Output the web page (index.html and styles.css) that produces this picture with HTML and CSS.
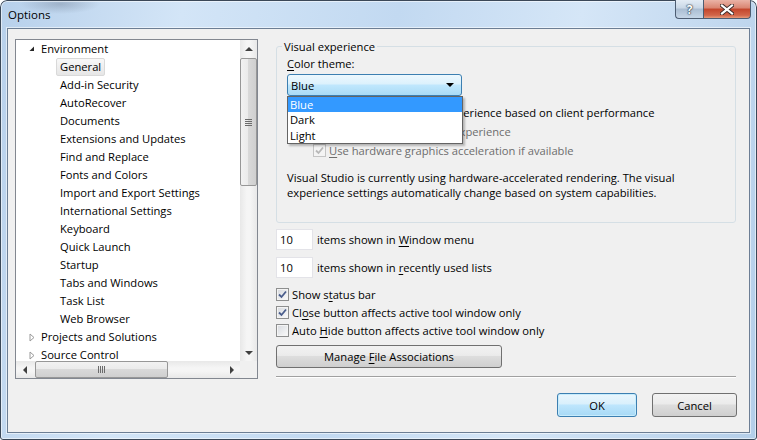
FILE: index.html
```html
<!DOCTYPE html>
<html lang="en">
<head>
    <meta charset="UTF-8">
    <title>Options</title>
    <link rel="stylesheet" href="styles.css">
</head>
<body>
    <div class="window">
        <div class="titlebar">
            <span class="title">Options</span>
            <div class="caption-buttons">
                <span class="cap-btn help">?</span>
                <span class="cap-btn close">
                    <svg width="14" height="11" viewBox="0 0 14 11">
                        <path d="M2 1.5 L12 9.5 M12 1.5 L2 9.5" stroke="#3b2a28" stroke-width="4" stroke-linecap="square"/>
                        <path d="M2 1.5 L12 9.5 M12 1.5 L2 9.5" stroke="#ffffff" stroke-width="2.2" stroke-linecap="square"/>
                    </svg>
                </span>
            </div>
        </div>

        <div class="client">
            <!-- left: category tree -->
            <div class="tree">
                <ul class="tree-list">
                    <li class="node">
                        <svg class="exp" width="8" height="8" viewBox="0 0 8 8"><polygon points="6,1.5 6,6 1.5,6" fill="#262626"/></svg>
                        <span>Environment</span>
                    </li>
                    <li class="leaf"><span class="selected">General</span></li>
                    <li class="leaf"><span>Add-in Security</span></li>
                    <li class="leaf"><span>AutoRecover</span></li>
                    <li class="leaf"><span>Documents</span></li>
                    <li class="leaf"><span>Extensions and Updates</span></li>
                    <li class="leaf"><span>Find and Replace</span></li>
                    <li class="leaf"><span>Fonts and Colors</span></li>
                    <li class="leaf"><span>Import and Export Settings</span></li>
                    <li class="leaf"><span>International Settings</span></li>
                    <li class="leaf"><span>Keyboard</span></li>
                    <li class="leaf"><span>Quick Launch</span></li>
                    <li class="leaf"><span>Startup</span></li>
                    <li class="leaf"><span>Tabs and Windows</span></li>
                    <li class="leaf"><span>Task List</span></li>
                    <li class="leaf"><span>Web Browser</span></li>
                    <li class="node">
                        <svg class="exp" width="8" height="9" viewBox="0 0 8 9"><polygon points="2,1 6,4.5 2,8" fill="#ffffff" stroke="#9a9a9a" stroke-width="1"/></svg>
                        <span>Projects and Solutions</span>
                    </li>
                    <li class="node">
                        <svg class="exp" width="8" height="9" viewBox="0 0 8 9"><polygon points="2,1 6,4.5 2,8" fill="#ffffff" stroke="#9a9a9a" stroke-width="1"/></svg>
                        <span>Source Control</span>
                    </li>
                </ul>

                <div class="vscroll">
                    <div class="sb-btn"><span class="arrow-up"></span></div>
                    <div class="sb-track">
                        <div class="thumb-v"><span class="grip-v"></span></div>
                    </div>
                    <div class="sb-btn"><span class="arrow-down"></span></div>
                </div>

                <div class="hscroll">
                    <div class="sb-btn"><span class="arrow-left"></span></div>
                    <div class="sb-track">
                        <div class="thumb-h"><span class="grip-h"></span></div>
                    </div>
                    <div class="sb-btn"><span class="arrow-right"></span></div>
                </div>

                <div class="corner"></div>
            </div>

            <!-- right: settings page -->
            <div class="pane">
                <fieldset class="group">
                    <legend>Visual experience</legend>
                    <div class="field-label"><u>C</u>olor theme:</div>

                    <div class="combo-wrap">
                        <div class="combo">
                            <span>Blue</span>
                            <span class="combo-arrow"></span>
                        </div>
                        <ul class="dropdown">
                            <li class="active">Blue</li>
                            <li>Dark</li>
                            <li>Light</li>
                        </ul>
                    </div>

                    <div class="visual-checks">
                        <div class="check-row">
                            <span class="checkbox">
                                <svg width="11" height="11" viewBox="0 0 11 11"><path d="M2 5.5 L4.5 8 L9 2.5" fill="none" stroke="#4a5d8c" stroke-width="1.8"/></svg>
                            </span>
                            <span>Automatically adjust visual experience based on client performance</span>
                        </div>
                        <div class="check-row indent disabled">
                            <span class="checkbox"></span>
                            <span>Enable rich client visual experience</span>
                        </div>
                        <div class="check-row indent disabled">
                            <span class="checkbox">
                                <svg width="11" height="11" viewBox="0 0 11 11"><path d="M2 5.5 L4.5 8 L9 2.5" fill="none" stroke="#b8b8b8" stroke-width="1.8"/></svg>
                            </span>
                            <span><u>U</u>se hardware graphics acceleration if available</span>
                        </div>
                    </div>

                    <p class="note">Visual Studio is currently using hardware-accelerated rendering. The visual experience settings automatically change based on system capabilities.</p>
                </fieldset>

                <div class="spin-row first">
                    <span class="spin">10</span>
                    <span>items shown in <u>W</u>indow menu</span>
                </div>
                <div class="spin-row">
                    <span class="spin">10</span>
                    <span>items shown in <u>r</u>ecently used lists</span>
                </div>

                <div class="options">
                    <div class="check-row">
                        <span class="checkbox">
                            <svg width="11" height="11" viewBox="0 0 11 11"><path d="M2 5.5 L4.5 8 L9 2.5" fill="none" stroke="#4a5d8c" stroke-width="1.8"/></svg>
                        </span>
                        <span>Show s<u>t</u>atus bar</span>
                    </div>
                    <div class="check-row">
                        <span class="checkbox">
                            <svg width="11" height="11" viewBox="0 0 11 11"><path d="M2 5.5 L4.5 8 L9 2.5" fill="none" stroke="#4a5d8c" stroke-width="1.8"/></svg>
                        </span>
                        <span>Cl<u>o</u>se button affects active tool window only</span>
                    </div>
                    <div class="check-row">
                        <span class="checkbox"></span>
                        <span>Auto <u>H</u>ide button affects active tool window only</span>
                    </div>
                </div>

                <button class="btn btn-wide">Manage <u>F</u>ile Associations</button>

                <div class="separator"></div>

                <div class="footer">
                    <button class="btn btn-ok">OK</button>
                    <button class="btn btn-cancel">Cancel</button>
                </div>
            </div>
        </div>
    </div>
</body>
</html>
```

FILE: styles.css
```css
* {
    margin: 0;
    padding: 0;
    box-sizing: border-box;
}

body {
    margin: 0;
    background: #ffffff;
    font-family: "Open Sans", "Noto Sans", sans-serif;
    font-size: 11.2px;
    color: #000000;
}

u {
    text-decoration: underline;
    text-underline-offset: 2px;
}

/* Window frame */
.window {
    width: 757px;
    height: 440px;
    border-radius: 7px 7px 3px 3px;
    overflow: hidden;
    background:
        radial-gradient(ellipse 40px 10px at 60px 4px, rgba(60, 70, 90, 0.25), transparent),
        linear-gradient(100deg, #b7d0eb 0%, #d3e5f7 22%, #c2d9f1 48%, #d5e6f7 70%, #b4cee9 100%);
    box-shadow: inset 0 0 0 1px #3b4858, inset 0 0 0 2px rgba(255, 255, 255, 0.55);
    display: flex;
    flex-direction: column;
}

.titlebar {
    height: 28px;
    display: flex;
    align-items: flex-start;
}

.title {
    padding: 7px 0 0 8px;
    line-height: 16px;
    font-size: 11.5px;
}

.caption-buttons {
    margin-left: auto;
    margin-right: 6px;
    display: flex;
}

.cap-btn {
    height: 19px;
    display: flex;
    align-items: center;
    justify-content: center;
    border: 1px solid #4d5d72;
    border-top: none;
}

.help {
    width: 28px;
    border-radius: 0 0 0 4px;
    border-right: none;
    background: linear-gradient(#e3ecf5, #c9d7e6 45%, #aabdd2 50%, #c6d6e7);
    color: #ffffff;
    font-weight: 700;
    font-size: 12px;
    text-shadow: 0 0 2px #2c3a4b, 0 0 1px #2c3a4b, 0 0 1px #2c3a4b;
}

.close {
    width: 48px;
    border-radius: 0 0 4px 0;
    background: linear-gradient(#eab3a6, #d98470 45%, #c3452b 50%, #d2664a 85%, #e79b7b);
}

/* Client area */
.client {
    margin: 0 7px;
    height: 405px;
    border: 1px solid #6c7e94;
    box-shadow: 0 0 0 1px rgba(255, 255, 255, 0.55);
    background: #f0f0f0;
    display: flex;
    padding: 10px 12px 0 7px;
}

/* Tree */
.tree {
    width: 243px;
    height: 340px;
    flex-shrink: 0;
    margin-right: 18px;
    border: 1px solid #828790;
    background: #ffffff;
    display: grid;
    grid-template-columns: 1fr 17px;
    grid-template-rows: 1fr 17px;
}

.tree-list {
    list-style: none;
    overflow: hidden;
}

.tree-list li {
    height: 18px;
    line-height: 18px;
    white-space: nowrap;
    display: flex;
    align-items: center;
}

.tree-list .node {
    padding-left: 12px;
}

.tree-list .exp {
    width: 8px;
    margin-right: 5px;
    flex-shrink: 0;
}

.tree-list .leaf span {
    margin-left: 40px;
    padding: 0 3px;
    line-height: 16px;
    border: 1px solid transparent;
    border-radius: 2px;
}

.tree-list .leaf .selected {
    background: linear-gradient(#f8f8f8, #e6e6e6);
    border-color: #d9d9d9;
}

/* Scrollbars */
.vscroll,
.hscroll {
    display: flex;
    background: linear-gradient(90deg, #e8e8e8, #f5f5f5 40%, #f5f5f5 60%, #e8e8e8);
}

.vscroll {
    flex-direction: column;
}

.hscroll {
    background: linear-gradient(#e8e8e8, #f5f5f5 40%, #f5f5f5 60%, #e8e8e8);
}

.sb-btn {
    width: 17px;
    height: 17px;
    flex-shrink: 0;
    display: flex;
    align-items: center;
    justify-content: center;
}

.sb-track {
    flex: 1;
    display: flex;
}

.vscroll .sb-track {
    flex-direction: column;
}

.thumb-v {
    margin-top: 1px;
    height: 128px;
    border: 1px solid #979797;
    border-radius: 2px;
    background: linear-gradient(90deg, #f2f2f2, #ebebeb 45%, #d9d9d9 50%, #cfcfcf);
    display: flex;
    align-items: center;
    justify-content: center;
}

.thumb-h {
    margin-left: 2px;
    width: 133px;
    border: 1px solid #979797;
    border-radius: 2px;
    background: linear-gradient(#f2f2f2, #ebebeb 45%, #d9d9d9 50%, #cfcfcf);
    display: flex;
    align-items: center;
    justify-content: center;
}

.grip-v {
    width: 7px;
    height: 7px;
    background: repeating-linear-gradient(#6b6b6b 0 1px, transparent 1px 2px);
}

.grip-h {
    width: 7px;
    height: 7px;
    background: repeating-linear-gradient(90deg, #6b6b6b 0 1px, transparent 1px 2px);
}

.arrow-up,
.arrow-down,
.arrow-left,
.arrow-right {
    width: 0;
    height: 0;
    border: 4px solid transparent;
}

.arrow-up {
    border-bottom: 4px solid #404040;
    border-top-width: 0;
}

.arrow-down {
    border-top: 4px solid #404040;
    border-bottom-width: 0;
}

.arrow-left {
    border-right: 4px solid #404040;
    border-left-width: 0;
}

.arrow-right {
    border-left: 4px solid #404040;
    border-right-width: 0;
}

.corner {
    background: #f0f0f0;
}

/* Settings pane */
.pane {
    flex: 1;
}

.group {
    width: 460px;
    border: 1px solid #d5dfe5;
    border-radius: 3px;
    padding: 2px 10px 22px 10px;
}

.group legend {
    margin-left: -5px;
    padding: 0 2px;
    line-height: 15px;
}

.field-label {
    line-height: 15px;
}

.combo-wrap {
    position: relative;
    width: 175px;
    margin-top: 3px;
}

.combo {
    height: 22px;
    border: 1px solid #3c7fb1;
    border-radius: 3px;
    background: linear-gradient(#edf8fe, #dcf1fc 45%, #c0e7fd 50%, #a9dbf6);
    display: flex;
    align-items: center;
    padding: 0 4px 0 3px;
}

.combo-arrow {
    margin-left: auto;
    margin-right: 3px;
    width: 0;
    height: 0;
    border-left: 4px solid transparent;
    border-right: 4px solid transparent;
    border-top: 4px solid #000000;
}

.dropdown {
    position: absolute;
    top: 22px;
    left: 0;
    width: 176px;
    list-style: none;
    background: #ffffff;
    border: 1px solid #646464;
    box-shadow: 2px 2px 2px rgba(0, 0, 0, 0.25);
    z-index: 2;
}

.dropdown li {
    height: 15.4px;
    line-height: 15px;
    padding-left: 2px;
}

.dropdown .active {
    background: #3399ff;
    color: #ffffff;
}

.visual-checks {
    margin-top: 7px;
}

.check-row {
    display: flex;
    align-items: center;
    height: 19px;
    white-space: nowrap;
}

.check-row.indent {
    padding-left: 26px;
}

.check-row.disabled {
    color: #6d6d6d;
}

.checkbox {
    width: 13px;
    height: 13px;
    margin-right: 3px;
    flex-shrink: 0;
    border: 1px solid #8e8f8f;
    background: linear-gradient(135deg, #d6d9de, #fbfbfb);
    box-shadow: inset 0 0 0 1px #f4f4f4;
    display: flex;
    align-items: center;
    justify-content: center;
}

.disabled .checkbox {
    border-color: #c4c4c4;
    background: #f4f4f4;
}

.note {
    margin-top: 10px;
    line-height: 15px;
}

.spin-row {
    display: flex;
    align-items: center;
    height: 21px;
    margin-top: 7px;
}

.spin-row.first {
    margin-top: 6px;
}

.spin {
    width: 37px;
    height: 21px;
    line-height: 19px;
    padding-left: 3px;
    margin-right: 4px;
    background: #ffffff;
    border: 1px solid #e3e3e8;
}

.options {
    margin-top: 7px;
}

.options .check-row {
    height: 18px;
}

.btn {
    font-family: inherit;
    font-size: 11.2px;
    height: 23px;
    border: 1px solid #707070;
    border-radius: 3px;
    background: linear-gradient(#f2f2f2, #ebebeb 45%, #dddddd 50%, #cfcfcf);
    color: #000000;
}

.btn-wide {
    display: block;
    width: 226px;
    margin-top: 6px;
}

.separator {
    width: 460px;
    margin-top: 8px;
    border-top: 1px solid #a0a0a0;
    border-bottom: 1px solid #ffffff;
}

.footer {
    display: flex;
    justify-content: flex-end;
    gap: 15px;
    margin-top: 15px;
}

.btn-ok {
    width: 80px;
    height: 24px;
    border-color: #3c7fb1;
    background: linear-gradient(#eaf6fd, #d9f0fc 45%, #bee6fd 50%, #a7d9f5);
    box-shadow: inset 0 0 0 1px #c7ecfc;
}

.btn-cancel {
    width: 85px;
    height: 24px;
}
```
